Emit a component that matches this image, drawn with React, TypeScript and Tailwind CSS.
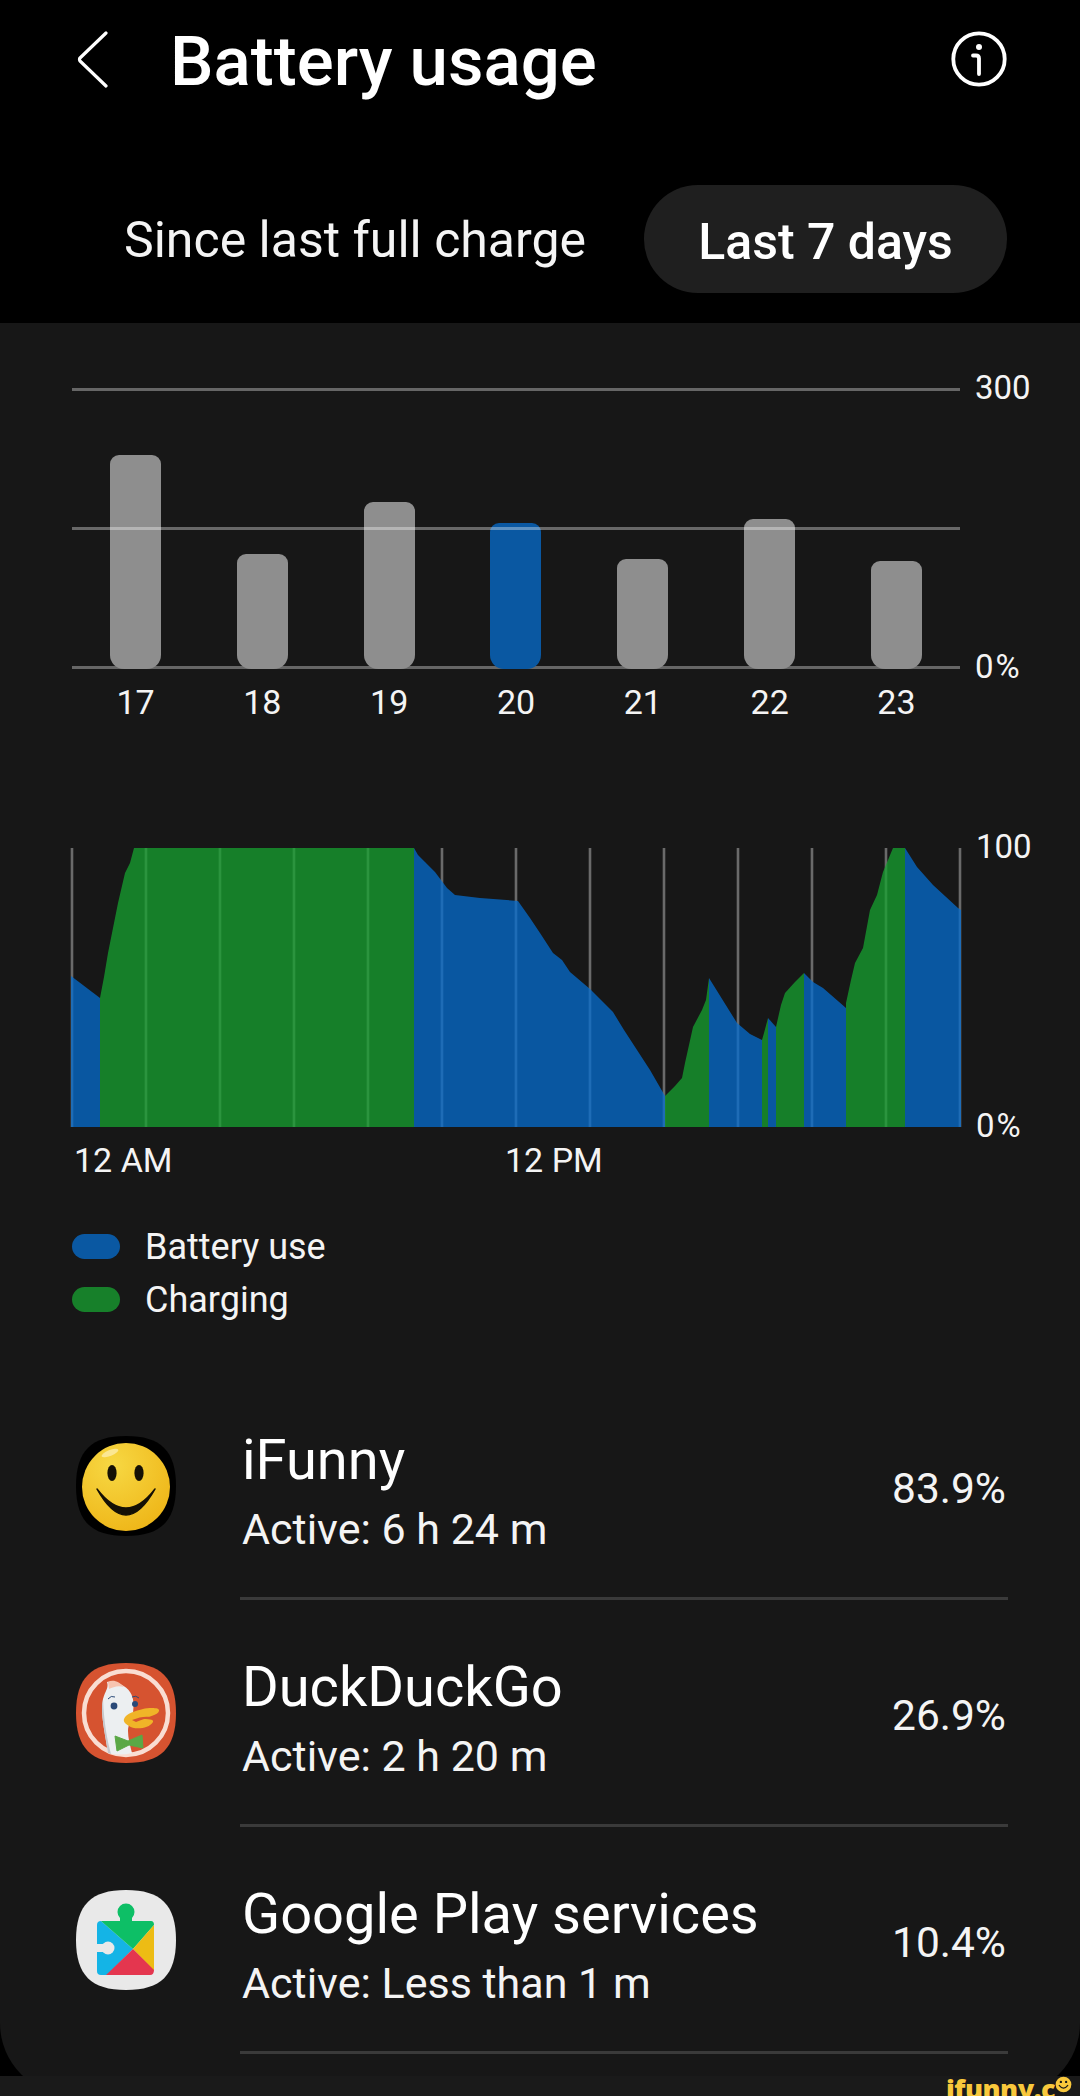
const BARS = [
  { day: '17', height: 214 },
  { day: '18', height: 115 },
  { day: '19', height: 167 },
  { day: '20', height: 146, active: true },
  { day: '21', height: 110 },
  { day: '22', height: 150 },
  { day: '23', height: 108 },
]

// fills are see-through so the grid lines show faintly inside the areas
const BLUE = '#056dd0'
const GREEN = '#17a330'

const BOTTOM = 1127

// each area is one run of battery use or charging, in page pixels
const AREAS: { color: string; points: string }[] = [
  { color: BLUE, points: '71,976 100,998' },
  { color: GREEN, points: '100,998 104,977 108,953 113,928 118,903 125,873 130,863 134,848 414,848' },
  { color: BLUE, points: '414,848 418,855 425,862 435,872 447,888 455,895 480,898 518,901 530,918 540,933 553,953 562,960 570,972 590,989 613,1012 624,1030 637,1050 650,1070 665,1096' },
  { color: GREEN, points: '665,1096 675,1086 682,1078 685,1063 693,1027 702,1010 706,1000 709,978' },
  { color: BLUE, points: '709,978 737,1023 750,1034 762,1040' },
  { color: GREEN, points: '762,1040 764,1033 768,1018' },
  { color: BLUE, points: '768,1018 776,1027' },
  { color: GREEN, points: '776,1027 781,1005 785,993 795,982 804,973' },
  { color: BLUE, points: '804,973 813,982 823,988 846,1008' },
  { color: GREEN, points: '846,1003 851,980 855,963 863,948 870,910 877,895 883,872 893,848 905,848' },
  { color: BLUE, points: '905,848 917,867 933,885 958,908 961,910' },
]

const GRID_X = [72, 146, 220, 294, 368, 442, 516, 590, 664, 738, 812, 886, 960]

const SQUIRCLE = 'M50 0 C85 0 100 15 100 50 C100 85 85 100 50 100 C15 100 0 85 0 50 C0 15 15 0 50 0 Z'

function areaPath(points: string) {
  const pts = points.split(' ')
  const first = pts[0].split(',')[0]
  const last = pts[pts.length - 1].split(',')[0]
  return `M${first},${BOTTOM} L${pts.join(' L')} L${last},${BOTTOM} Z`
}

function BackIcon() {
  return (
    <svg width="34" height="58" viewBox="0 0 34 58" fill="none" className="mb-[4px]" aria-hidden="true">
      <path d="M30 3 L4 28 Q3 29 4 31 L30 56" stroke="white" strokeWidth="3.2" strokeLinecap="round" />
    </svg>
  )
}

function InfoIcon() {
  return (
    <svg width="58" height="58" viewBox="0 0 58 58" fill="none" className="mb-[4px]" aria-hidden="true">
      <circle cx="29" cy="29" r="25.7" stroke="white" strokeWidth="3.8" />
      <circle cx="29" cy="17" r="3" fill="white" />
      <path d="M23 25.5 H26 Q29 25.5 29 28.5 V44" stroke="white" strokeWidth="3.8" strokeLinecap="round" />
    </svg>
  )
}

function UsageChart() {
  return (
    <svg width="896" height="283" viewBox="70 846 896 283" aria-hidden="true" className="block">
      {GRID_X.map((x) => (
        <line key={x} x1={x} x2={x} y1="848" y2="1127" stroke="#6a6a6a" strokeWidth="2.6" />
      ))}
      {AREAS.map((a) => (
        <path key={a.points} d={areaPath(a.points)} fill={a.color} fillOpacity="0.75" />
      ))}
    </svg>
  )
}

function SmileyIcon() {
  return (
    <svg width="100" height="100" viewBox="0 0 100 100" aria-hidden="true">
      <path d={SQUIRCLE} fill="#000" />
      <defs>
        <radialGradient id="smile" cx="35%" cy="25%" r="85%">
          <stop offset="0" stopColor="#f7d843" />
          <stop offset="1" stopColor="#eeb416" />
        </radialGradient>
      </defs>
      <circle cx="50" cy="51" r="44" fill="url(#smile)" />
      <ellipse cx="34" cy="17" rx="9" ry="3" fill="#fbe792" transform="rotate(-22 34 17)" />
      <ellipse cx="36" cy="37" rx="4.6" ry="8" fill="#151005" />
      <ellipse cx="63" cy="37" rx="4.6" ry="8" fill="#151005" />
      <path d="M21 53 Q50 105 79 53 Q50 91 21 53 Z" fill="#151005" stroke="#151005" strokeWidth="1.5" strokeLinejoin="round" />
    </svg>
  )
}

function DuckIcon() {
  return (
    <svg width="100" height="100" viewBox="0 0 100 100" aria-hidden="true">
      <path d={SQUIRCLE} fill="#d65330" />
      <circle cx="50" cy="50" r="42" fill="none" stroke="#f9ddd2" strokeWidth="4.5" />
      <path d="M32 90 C29 70 24 50 27 36 C29 28 33 25 31 19 C38 18 50 22 54 29 C58 35 58 42 57 50 C55 58 52 62 52 68 C52 75 54 82 56 90 Q44 93 32 90 Z" fill="#eceff1" />
      <path d="M32 90 C29 70 24 50 27 36 C28 60 31 76 35 91 Z" fill="#c5c8cc" />
      <path d="M32 19 C37 16 44 19 48 24 C42 22 37 24 33 26 Z" fill="#f7c4b0" />
      <circle cx="38" cy="43" r="3.4" fill="#2a4a78" />
      <circle cx="59" cy="41" r="3" fill="#2a4a78" />
      <path d="M32 36 Q35 32 39 34 M56 34 Q60 32 63 35" stroke="#2a4a78" strokeWidth="1" fill="none" />
      <path d="M48 56 C50 50 60 48 67 46 C72 45 84 44 83 48 C82 52 72 54 65 56 C72 56 78 56 77 59 C73 66 58 67 53 63 C50 61 47 59 48 56 Z" fill="#f0b428" />
      <path d="M56 57 C63 54 70 53 74 54 C69 56 64 57 60 59 Z" fill="#d65330" />
      <path d="M39 73 L52 78 L66 72 L67 85 L53 82 L41 88 Z" fill="#5aa846" stroke="#5aa846" strokeLinejoin="round" />
    </svg>
  )
}

function PlayServicesIcon() {
  return (
    <svg width="100" height="100" viewBox="0 0 100 100" aria-hidden="true">
      <path d={SQUIRCLE} fill="#e9e9e9" />
      <path d="M25 31 Q21 31 21 35 L21 81 Q21 85 25 85 L31 85 L57 59 Z" fill="#14b4e6" />
      <path d="M25 31 L44 31 L44 28 A8.5 8.5 0 1 1 56 28 L56 31 L75 31 Q78 31 78 35 L57 59 Z" fill="#0dbf66" />
      <path d="M78 35 L78 81 L57 59 Z" fill="#edbc14" />
      <path d="M57 59 L78 80 Q78 85 74 85 L30 85 Z" fill="#e4364f" />
      <rect x="20" y="54" width="10" height="8" fill="#e9e9e9" />
      <circle cx="32" cy="58" r="6.5" fill="#e9e9e9" />
    </svg>
  )
}

const APPS = [
  { name: 'iFunny', active: 'Active: 6 h 24 m', pct: '83.9%', Icon: SmileyIcon },
  { name: 'DuckDuckGo', active: 'Active: 2 h 20 m', pct: '26.9%', Icon: DuckIcon },
  { name: 'Google Play services', active: 'Active: Less than 1 m', pct: '10.4%', Icon: PlayServicesIcon },
]

export default function App() {
  return (
    <div className="relative h-[2096px] w-[1080px] overflow-hidden bg-black font-['Roboto',sans-serif] text-[#f4f4f4]">
      {/* Header */}
      <header className="h-[323px]">
        <div className="flex h-[122px] items-center justify-between pl-[76px] pr-[72px]">
          <div className="flex items-center gap-[60px]">
            <BackIcon />
            <h1 className="whitespace-nowrap text-[69px] font-medium leading-none text-white">Battery usage</h1>
          </div>
          <InfoIcon />
        </div>
        <div className="mt-[63px] flex items-center justify-between pl-[124px] pr-[73px]">
          <span className="pt-[2px] text-[50px] leading-none">Since last full charge</span>
          <span className="flex h-[108px] w-[363px] items-center justify-center rounded-full bg-[#1f1f1f] pt-[6px] text-[50px] font-medium text-white">
            Last 7 days
          </span>
        </div>
      </header>

      {/* Panel */}
      <main className="h-[1773px] rounded-b-[73px] bg-[#171717] pl-[72px] pr-[72px]">
        {/* Daily bars */}
        <div className="relative h-[400px] pt-[65px]">
          <div className="relative h-[281px] w-[888px] border-b-[3px] border-t-[3px] border-[#666]">
            <div className="absolute inset-x-0 bottom-[-3px] flex items-end justify-between pl-[38px] pr-[38px]">
              {BARS.map((b) => (
                <div
                  key={b.day}
                  className={b.active ? 'w-[51px] rounded-t-[9px] rounded-b-[14px] bg-[#0a58a2]' : 'w-[51px] rounded-t-[9px] rounded-b-[14px] bg-[#8e8e8e]'}
                  style={{ height: b.height }}
                />
              ))}
            </div>
            <div className="absolute inset-x-0 top-[136px] h-[3px] bg-white/35" />
            <span className="absolute left-[903px] top-[-22px] text-[33px] leading-[38px]">300</span>
            <span className="absolute left-[903px] bottom-[-20px] text-[33px] leading-[38px] tracking-[2px]">0%</span>
          </div>
          <div className="mt-[14px] flex w-[888px] justify-between pl-[38px] pr-[38px]">
            {BARS.map((b) => (
              <span key={b.day} className="w-[51px] text-center text-[34px] leading-[38px]">{b.day}</span>
            ))}
          </div>
        </div>

        {/* Battery level */}
        <div className="relative ml-[-2px] mt-[123px]">
          <UsageChart />
          <span className="absolute left-[906px] top-[-18px] text-[33px] leading-[38px]">100</span>
          <span className="absolute left-[906px] top-[261px] text-[33px] leading-[38px] tracking-[2px]">0%</span>
        </div>
        <div className="mt-[12px] flex text-[34px] leading-[38px]">
          <span className="w-[433px] pl-[2px]">12 AM</span>
          <span>12 PM</span>
        </div>

        {/* Legend */}
        <div className="mt-[50px] flex flex-col gap-[16px] text-[36px] leading-[37px]">
          <div className="flex items-center gap-[25px]">
            <span className="mb-[3px] h-[25px] w-[48px] rounded-full bg-[#0a58a2]" />
            Battery use
          </div>
          <div className="flex items-center gap-[25px]">
            <span className="mb-[3px] h-[25px] w-[48px] rounded-full bg-[#17802a]" />
            Charging
          </div>
        </div>

        {/* App list */}
        <ul className="ml-[4px] mt-[54px]">
          {APPS.map(({ name, active, pct, Icon }) => (
            <li key={name} className="flex h-[227px] items-start">
              <div className="mt-[63px] shrink-0">
                <Icon />
              </div>
              <div className="ml-[64px] flex h-full flex-1 items-start justify-between border-b-[3px] border-[#3a3a3a] pl-[2px] pr-[2px] pt-[55px]">
                <div>
                  <div className="text-[56px] leading-[64px] text-white">{name}</div>
                  <div className="mt-[12px] text-[43px] leading-[50px]">{active}</div>
                </div>
                <div className="mt-[36px] text-[42.5px] leading-[50px]">{pct}</div>
              </div>
            </li>
          ))}
        </ul>
      </main>

      {/* Watermark */}
      <div className="absolute inset-x-0 bottom-0 h-[20px] bg-[#1a1a1a]" />
      <div className="absolute bottom-0 right-[8px] flex h-[21px] items-start overflow-hidden font-['Open_Sans',sans-serif] text-[27px] font-extrabold leading-[27px] tracking-[-0.5px] text-[#f9c83c]">
        ifunny.c
        <svg width="17" height="17" viewBox="0 0 26 26" className="mt-[1px]" aria-hidden="true">
          <circle cx="13" cy="13" r="12" fill="#f9c83c" />
          <circle cx="9" cy="9" r="1.8" fill="#1a1a1a" />
          <circle cx="17" cy="9" r="1.8" fill="#1a1a1a" />
          <path d="M6 14 Q13 23 20 14" fill="none" stroke="#1a1a1a" strokeWidth="1.8" />
        </svg>
      </div>
    </div>
  )
}
